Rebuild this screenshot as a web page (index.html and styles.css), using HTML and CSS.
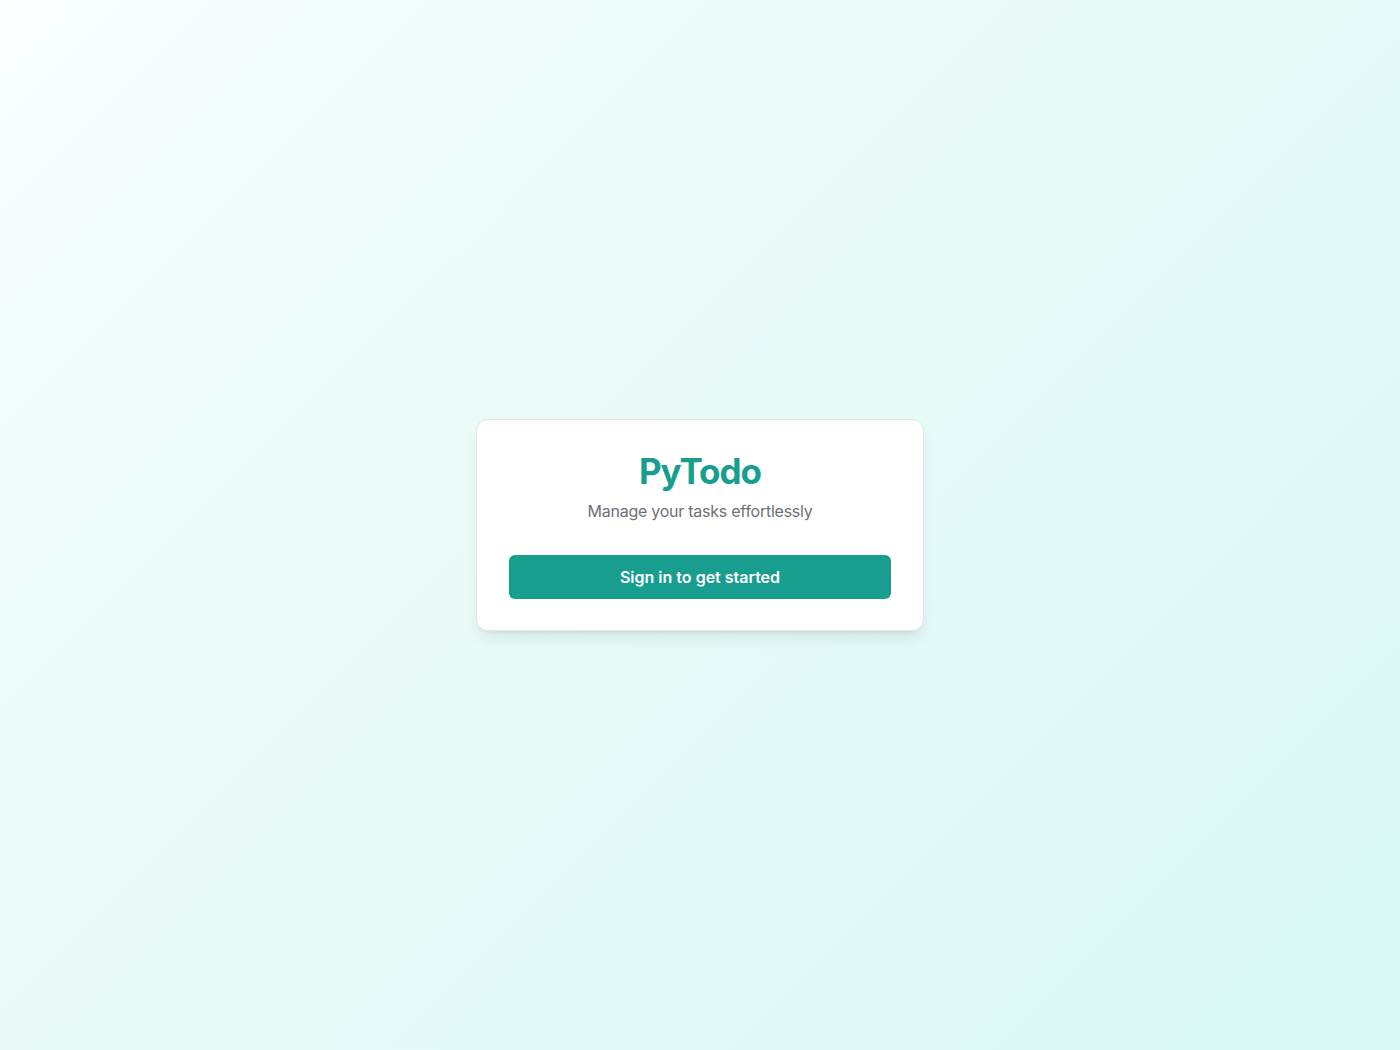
FILE: index.html
```html
<!DOCTYPE html>
<html lang="en">
<head>
<meta charset="utf-8">
<title>PyTodo</title>
<link rel="stylesheet" href="styles.css">
</head>
<body>
<main class="page">
  <section class="card">
    <h1 class="title">PyTodo</h1>
    <p class="subtitle">Manage your tasks effortlessly</p>
    <button class="btn" type="button">Sign in to get started</button>
  </section>
</main>
</body>
</html>
```

FILE: styles.css
```css
* { box-sizing: border-box; }
html, body { margin: 0; height: 100%; }
body {
  font-family: "Inter", "Noto Sans", sans-serif;
  background: linear-gradient(135deg, #fcffff 0%, #f0fcfb 18%, #e6faf8 55%, #d8f8f5 100%);
}
.page {
  min-height: 100vh;
  display: flex;
  align-items: center;
  justify-content: center;
}
.card {
  width: 448px;
  background: #ffffff;
  border: 1px solid #e2e6e8;
  border-radius: 12px;
  padding: 31px 32px;
  box-shadow: 0 10px 15px -3px rgba(0,0,0,0.08), 0 4px 6px -4px rgba(0,0,0,0.08);
  display: flex;
  flex-direction: column;
  align-items: stretch;
  text-align: center;
}
.title {
  margin: 0 0 8px;
  font-size: 35px;
  line-height: 40px;
  font-weight: 700;
  color: #179e8e;
  letter-spacing: -1px;
}
.subtitle {
  margin: 0 0 32px;
  font-size: 16px;
  line-height: 24px;
  color: #6e7178;
  letter-spacing: -0.25px;
}
.btn {
  height: 44px;
  border: none;
  border-radius: 6px;
  background: #179e8e;
  color: #ffffff;
  font-family: inherit;
  font-size: 16px;
  font-weight: 600;
  cursor: pointer;
}
```
